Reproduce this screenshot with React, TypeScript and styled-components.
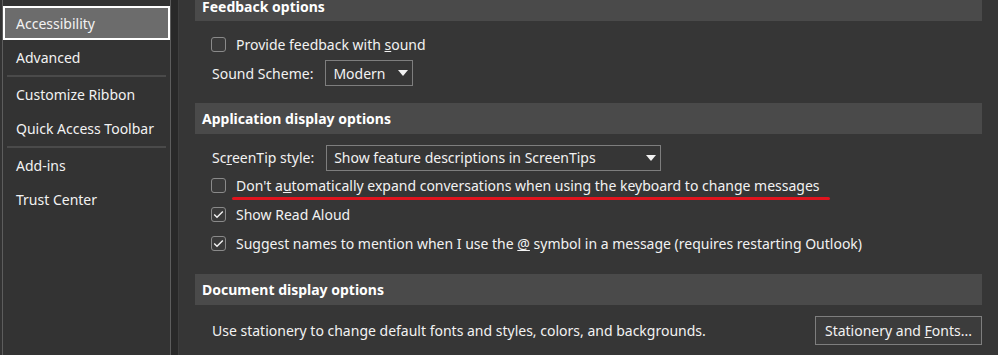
import React from "react"
import styled, { createGlobalStyle } from "styled-components"

const GlobalStyle = createGlobalStyle`
  html, body {
    margin: 0;
    padding: 0;
    background: #363636;
    overflow: hidden;
  }
  body {
    font-family: "Noto Sans", "Open Sans", sans-serif;
    font-size: 14px;
    color: #f2f2f2;
  }
`

const SPage = styled.div`
  display: flex;
  width: 998px;
  height: 355px;
  overflow: hidden;
`

const SSidebar = styled.div`
  width: 171px;
  flex-shrink: 0;
  padding-left: 2px;
  box-sizing: border-box;
  background: #333333;
`

const SNav = styled.nav`
  height: 100%;
  padding-top: 6px;
  box-sizing: border-box;
  border-left: 1px solid #5d5d5d;
  border-right: 1px solid #5d5d5d;
  display: flex;
  flex-direction: column;
`

const SNavItem = styled.div<{ $selected?: boolean }>`
  height: 34px;
  display: flex;
  align-items: center;
  padding-left: 11px;
  box-sizing: border-box;
  white-space: nowrap;
  color: #f2f2f2;
  border: 2px solid ${({ $selected }) => ($selected ? "#ffffff" : "transparent")};
  background: ${({ $selected }) => ($selected ? "#6c6c6c" : "transparent")};
`

const SNavDivider = styled.div`
  height: 2px;
  margin: 1px 4px 0 4px;
  background: #4a4a4a;
`

const SGutter = styled.div`
  width: 7px;
  flex-shrink: 0;
  background: #292929;
`

const SPanel = styled.div`
  flex: 1;
  border-left: 1px solid #3e3e3e;
  padding: 0 16px 0 16px;
  margin-top: -9px;
`

const SSectionHeader = styled.div<{ $h?: number }>`
  height: ${({ $h }) => $h ?? 31}px;
  display: flex;
  align-items: center;
  padding-left: 7px;
  background: #4a4a4a;
  font-weight: 700;
  color: #ffffff;
`

const SSectionBody = styled.div<{ $top: number; $bottom: number }>`
  display: flex;
  flex-direction: column;
  padding: ${({ $top, $bottom }) => `${$top}px 0 ${$bottom}px 16px`};
`

const SRow = styled.div<{ $h: number }>`
  height: ${({ $h }) => $h}px;
  display: flex;
  align-items: center;
  white-space: nowrap;
`

const SBox = styled.span`
  width: 15px;
  height: 15px;
  box-sizing: border-box;
  border: 1px solid #8a8a8a;
  border-radius: 3px;
  background: #3a3a3a;
  margin-right: 9px;
  display: flex;
  align-items: center;
  justify-content: center;
  flex-shrink: 0;
`

const SLabel = styled.span`
  position: relative;
  padding-left: 1px;
`

const SRedMark = styled.span`
  position: absolute;
  left: -3px;
  right: -10px;
  bottom: -5px;
  height: 3px;
  border-radius: 2px;
  background: #e0141e;
`

const SFieldLabel = styled.span`
  padding-left: 1px;
  margin-right: 12px;
`

const SSelect = styled.div<{ $w: number; $h: number }>`
  width: ${({ $w }) => $w}px;
  height: ${({ $h }) => $h}px;
  box-sizing: border-box;
  border: 1px solid #7e7e7e;
  display: flex;
  align-items: center;
  justify-content: space-between;
  padding: 0 4px 0 7px;
  background: #363636;
`

const SArrow = styled.span`
  width: 0;
  height: 0;
  border-left: 5px solid transparent;
  border-right: 5px solid transparent;
  border-top: 6px solid #f2f2f2;
`

const SSplitRow = styled(SRow)`
  justify-content: space-between;
  padding-left: 1px;
`

const SButton = styled.button`
  height: 29px;
  padding: 0 9px;
  box-sizing: border-box;
  border: 1px solid #7e7e7e;
  background: #3c3c3c;
  color: #f2f2f2;
  font: inherit;
`

const Check = () => (
  <svg width="11" height="9" viewBox="0 0 11 9">
    <path d="M1.2 4.6 L4 7.3 L9.8 1.5" fill="none" stroke="#f2f2f2" strokeWidth="1.4" />
  </svg>
)

const CheckRow = ({ checked, h, children }: { checked?: boolean; h: number; children: React.ReactNode }) => (
  <SRow $h={h}>
    <SBox>{checked && <Check />}</SBox>
    {children}
  </SRow>
)

const App = () => {
  return (
    <SPage>
      <GlobalStyle />
      <SSidebar>
        <SNav>
          <SNavItem $selected>Accessibility</SNavItem>
          <SNavItem>Advanced</SNavItem>
          <SNavDivider />
          <SNavItem>Customize Ribbon</SNavItem>
          <SNavItem>Quick Access Toolbar</SNavItem>
          <SNavDivider />
          <SNavItem>Add-ins</SNavItem>
          <SNavItem>Trust Center</SNavItem>
        </SNav>
      </SSidebar>
      <SGutter />
      <SPanel>
        <SSectionHeader $h={30}>Feedback options</SSectionHeader>
        <SSectionBody $top={9} $bottom={15}>
          <CheckRow h={28}>
            <SLabel>Provide feedback with <u>s</u>ound</SLabel>
          </CheckRow>
          <SRow $h={30}>
            <SFieldLabel>Sound Scheme:</SFieldLabel>
            <SSelect $w={88} $h={26}>
              Modern
              <SArrow />
            </SSelect>
          </SRow>
        </SSectionBody>

        <SSectionHeader>Application display options</SSectionHeader>
        <SSectionBody $top={10} $bottom={16}>
          <SRow $h={27}>
            <SFieldLabel>Sc<u>r</u>eenTip style:</SFieldLabel>
            <SSelect $w={335} $h={26}>
              Show feature descriptions in ScreenTips
              <SArrow />
            </SSelect>
          </SRow>
          <CheckRow h={29}>
            <SLabel>
              Don't a<u>u</u>tomatically expand conversations when using the keyboard to change messages
              <SRedMark />
            </SLabel>
          </CheckRow>
          <CheckRow checked h={29}>
            <SLabel>Show Read Aloud</SLabel>
          </CheckRow>
          <CheckRow checked h={29}>
            <SLabel>Suggest names to mention when I use the <u>@</u> symbol in a message (requires restarting Outlook)</SLabel>
          </CheckRow>
        </SSectionBody>

        <SSectionHeader>Document display options</SSectionHeader>
        <SSectionBody $top={11} $bottom={0}>
          <SSplitRow $h={29}>
            <span>Use stationery to change default fonts and styles, colors, and backgrounds.</span>
            <SButton>Stationery and <u>F</u>onts...</SButton>
          </SSplitRow>
        </SSectionBody>
      </SPanel>
    </SPage>
  )
}

export default App
